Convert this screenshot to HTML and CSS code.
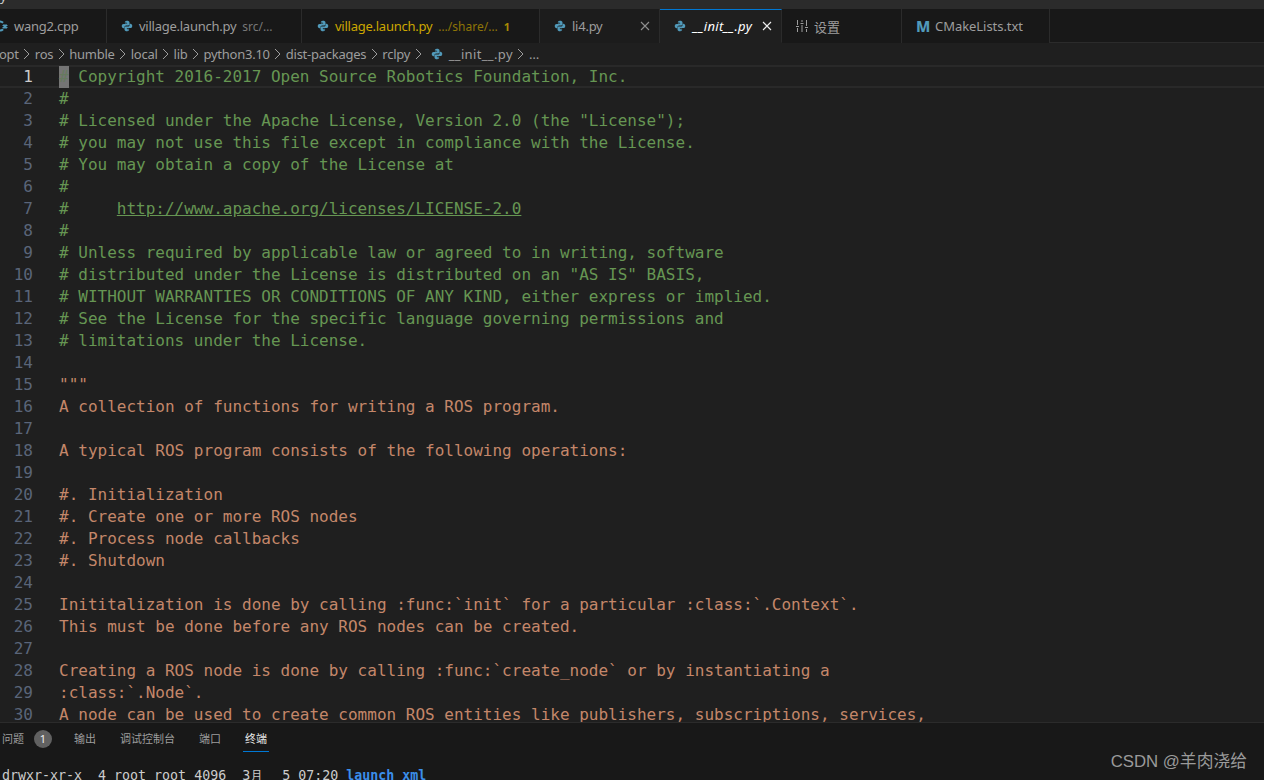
FILE: index.html
```html
<!DOCTYPE html>
<html>
<head>
  <link rel="stylesheet" href="styles.css">
</head>
<body>
  <svg class="icon-defs" width="0" height="0">
    <symbol id="py" viewBox="0 0 16 16">
      <path d="M7.9 1C5.6 1 5.2 2 5.2 3v1.500h3v.7H3.400C2 5.200 1 6.300 1 8s1 3 2.400 3h1.200V9.400c0-1.200 1-2.200 2.200-2.200h2.900c.9 0 1.600-.7 1.600-1.600V3c0-1.200-1.300-2-3.400-2zM6.500 2.200a.7.7 0 1 1 0 1.400.7.7 0 0 1 0-1.400z"/>
      <path d="M8.100 15c2.300 0 2.700-1 2.700-2v-1.500h-3v-.7h4.800C14 10.800 15 9.700 15 8s-1-3-2.400-3h-1.200v1.600c0 1.200-1 2.200-2.200 2.200H6.300c-.9 0-1.600.7-1.600 1.600V13c0 1.200 1.300 2 3.400 2zm1.400-1.200a.7.7 0 1 1 0-1.400.7.7 0 0 1 0 1.400z"/>
    </symbol>
    <symbol id="chev" viewBox="0 0 7 12">
      <path d="M1 1l5 5-5 5"/>
    </symbol>
  </svg>

  <div class="top-strip"><span class="top-glyph">y</span></div>

  <!-- Tabs -->
  <div class="tabs">
    <div class="tab tab-first">
      <svg class="tab-icon cpp-icon" viewBox="0 0 16 16"><path d="M8 2.500a5.500 5.500 0 1 0 3.800 9.500l-1.500-1.500A3.400 3.400 0 1 1 8 4.600c.9 0 1.700.3 2.300.9l1.500-1.500A5.400 5.400 0 0 0 8 2.500z"/><path d="M10.500 7h1V6h1v1h1V6h1v1h1v1h-1v1h1v1h-1v1h-1v-1h-1v1h-1v-1h-1V9h1V8h-1z"/></svg>
      <span class="tab-name">wang2.cpp</span>
    </div>
    <div class="tab tab-village">
      <svg class="tab-icon"><use href="#py"/></svg>
      <span class="tab-name">village.launch.py</span>
      <span class="tab-path">src/…</span>
    </div>
    <div class="tab tab-warn">
      <svg class="tab-icon"><use href="#py"/></svg>
      <span class="tab-name">village.launch.py</span>
      <span class="tab-path">…/share/…</span>
      <span class="tab-count">1</span>
    </div>
    <div class="tab tab-li4">
      <svg class="tab-icon"><use href="#py"/></svg>
      <span class="tab-name">li4.py</span>
      <svg class="tab-close" viewBox="0 0 10 10"><path d="M1 1l8 8M9 1l-8 8"/></svg>
    </div>
    <div class="tab tab-active">
      <svg class="tab-icon"><use href="#py"/></svg>
      <span class="tab-name">__init__.py</span>
      <svg class="tab-close" viewBox="0 0 10 10"><path d="M1 1l8 8M9 1l-8 8"/></svg>
    </div>
    <div class="tab tab-settings">
      <svg class="settings-icon" viewBox="0 0 12 12"><path d="M1.500 0v5M1.500 8v4M6 0v2M6 5v7M10.500 0v6M10.500 9v3M0 6.500h3M4.500 3.500h3M9 7.500h3"/></svg>
      <span class="tab-name">设置</span>
    </div>
    <div class="tab tab-cmake">
      <span class="m-icon">M</span>
      <span class="tab-name">CMakeLists.txt</span>
    </div>
  </div>

  <!-- Breadcrumbs -->
  <div class="crumbs">
    <span>opt</span><svg class="chev"><use href="#chev"/></svg>
    <span>ros</span><svg class="chev"><use href="#chev"/></svg>
    <span>humble</span><svg class="chev"><use href="#chev"/></svg>
    <span>local</span><svg class="chev"><use href="#chev"/></svg>
    <span>lib</span><svg class="chev"><use href="#chev"/></svg>
    <span>python3.10</span><svg class="chev"><use href="#chev"/></svg>
    <span>dist-packages</span><svg class="chev"><use href="#chev"/></svg>
    <span>rclpy</span><svg class="chev"><use href="#chev"/></svg>
    <svg class="crumb-icon"><use href="#py"/></svg>
    <span class="crumb-file">__init__.py</span><svg class="chev"><use href="#chev"/></svg>
    <span>…</span>
  </div>

  <!-- Editor -->
  <div class="editor">
    <div class="line line-current"><span class="num">1</span><span class="code com"><b class="cursor">#</b> Copyright 2016-2017 Open Source Robotics Foundation, Inc.</span></div>
    <div class="line"><span class="num">2</span><span class="code com">#</span></div>
    <div class="line"><span class="num">3</span><span class="code com"># Licensed under the Apache License, Version 2.0 (the "License");</span></div>
    <div class="line"><span class="num">4</span><span class="code com"># you may not use this file except in compliance with the License.</span></div>
    <div class="line"><span class="num">5</span><span class="code com"># You may obtain a copy of the License at</span></div>
    <div class="line"><span class="num">6</span><span class="code com">#</span></div>
    <div class="line"><span class="num">7</span><span class="code com">#     <u>http://www.apache.org/licenses/LICENSE-2.0</u></span></div>
    <div class="line"><span class="num">8</span><span class="code com">#</span></div>
    <div class="line"><span class="num">9</span><span class="code com"># Unless required by applicable law or agreed to in writing, software</span></div>
    <div class="line"><span class="num">10</span><span class="code com"># distributed under the License is distributed on an "AS IS" BASIS,</span></div>
    <div class="line"><span class="num">11</span><span class="code com"># WITHOUT WARRANTIES OR CONDITIONS OF ANY KIND, either express or implied.</span></div>
    <div class="line"><span class="num">12</span><span class="code com"># See the License for the specific language governing permissions and</span></div>
    <div class="line"><span class="num">13</span><span class="code com"># limitations under the License.</span></div>
    <div class="line"><span class="num">14</span><span class="code"></span></div>
    <div class="line"><span class="num">15</span><span class="code str">"""</span></div>
    <div class="line"><span class="num">16</span><span class="code str">A collection of functions for writing a ROS program.</span></div>
    <div class="line"><span class="num">17</span><span class="code"></span></div>
    <div class="line"><span class="num">18</span><span class="code str">A typical ROS program consists of the following operations:</span></div>
    <div class="line"><span class="num">19</span><span class="code"></span></div>
    <div class="line"><span class="num">20</span><span class="code str">#. Initialization</span></div>
    <div class="line"><span class="num">21</span><span class="code str">#. Create one or more ROS nodes</span></div>
    <div class="line"><span class="num">22</span><span class="code str">#. Process node callbacks</span></div>
    <div class="line"><span class="num">23</span><span class="code str">#. Shutdown</span></div>
    <div class="line"><span class="num">24</span><span class="code"></span></div>
    <div class="line"><span class="num">25</span><span class="code str">Inititalization is done by calling :func:`init` for a particular :class:`.Context`.</span></div>
    <div class="line"><span class="num">26</span><span class="code str">This must be done before any ROS nodes can be created.</span></div>
    <div class="line"><span class="num">27</span><span class="code"></span></div>
    <div class="line"><span class="num">28</span><span class="code str">Creating a ROS node is done by calling :func:`create_node` or by instantiating a</span></div>
    <div class="line"><span class="num">29</span><span class="code str">:class:`.Node`.</span></div>
    <div class="line"><span class="num">30</span><span class="code str">A node can be used to create common ROS entities like publishers, subscriptions, services,</span></div>
  </div>

  <!-- Panel -->
  <div class="panel">
    <div class="panel-tabs">
      <span class="panel-tab">问题</span>
      <span class="badge">1</span>
      <span class="panel-tab">输出</span>
      <span class="panel-tab">调试控制台</span>
      <span class="panel-tab">端口</span>
      <span class="panel-tab panel-tab-active">终端</span>
    </div>
    <div class="terminal">drwxr-xr-x  4 root root 4096  3<span class="month">月</span>  5 07:20 <b>launch_xml</b></div>
    <div class="watermark">CSDN @羊肉浇给</div>
  </div>
</body>
</html>
```
FILE: styles.css
```css
* {
  margin: 0;
  padding: 0;
  box-sizing: border-box;
}

html, body {
  height: 780px;
  overflow: hidden;
}

body {
  background: #1f1f1f;
  font-family: "Noto Sans", "Noto Sans CJK SC", sans-serif;
  display: flex;
  flex-direction: column;
}

.icon-defs {
  position: absolute;
}

.top-strip {
  height: 9px;
  background: #2b2b2b;
  overflow: hidden;
  flex-shrink: 0;
}

.top-glyph {
  display: block;
  margin: -13px 0 0 0;
  font-size: 13px;
  line-height: 18px;
  color: #ccc;
}

/* Tabs */
.tabs {
  display: flex;
  height: 34px;
  background: #181818;
  border-bottom: 1px solid #2b2b2b;
  flex-shrink: 0;
}

.tab {
  display: flex;
  align-items: center;
  height: 34px;
  border-right: 1px solid #2b2b2b;
  background: #181818;
  font-size: 13px;
  color: #9d9d9d;
  white-space: nowrap;
}

.tab-name {
  letter-spacing: -0.25px;
}

.tab-first { width: 107px; }
.tab-village { width: 195px; padding-left: 14px; }
.tab-warn { width: 238px; padding-left: 15px; }
.tab-li4 { width: 120px; padding-left: 14px; background: #1c1c1c; }
.tab-active {
  width: 122px;
  padding-left: 14px;
  background: #1f1f1f;
  border-top: 1px solid #0078d4;
  border-bottom: 1px solid #1f1f1f;
  color: #fff;
}
.tab-settings { width: 120px; padding-left: 14px; }
.tab-cmake { width: 148px; padding-left: 14px; }

.tab-icon {
  width: 12px;
  height: 12px;
  margin-right: 6px;
  fill: #519aba;
  flex-shrink: 0;
}

.cpp-icon {
  width: 16px;
  height: 16px;
  margin-left: -8px;
  margin-right: 6px;
}

.tab-active .tab-icon {
  margin-right: 7px;
}

.tab-active .tab-name {
  font-style: italic;
  width: 66px;
  letter-spacing: 0.3px;
}

.tab-li4 .tab-name {
  width: 65px;
}

.tab-path {
  margin-left: 6px;
  font-size: 12px;
  color: #777;
}

.tab-warn .tab-name {
  color: #cca700;
}

.tab-warn .tab-path {
  color: #8f7506;
}

.tab-count {
  margin-left: 6px;
  font-size: 11px;
  font-weight: 700;
  color: #a88a05;
}

.tab-close {
  width: 10px;
  height: 10px;
  margin-left: 3px;
  stroke: #8f8f8f;
  stroke-width: 1.1;
  fill: none;
  flex-shrink: 0;
}

.tab-active .tab-close {
  stroke: #eee;
}

.settings-icon {
  width: 12px;
  height: 12px;
  margin-right: 6px;
  stroke: #9d9d9d;
  stroke-width: 1;
  fill: none;
}

.tab-settings .tab-name {
  letter-spacing: 0;
}

.tab-cmake .tab-name {
  letter-spacing: -0.05px;
}

.m-icon {
  width: 13px;
  margin: 0 6px 0 0;
  font-size: 15px;
  font-weight: 800;
  line-height: 1;
  color: #519aba;
}

/* Breadcrumbs */
.crumbs {
  display: flex;
  align-items: center;
  gap: 4.5px;
  height: 22px;
  margin-left: -1px;
  font-size: 13px;
  letter-spacing: -0.25px;
  color: #9d9d9d;
  flex-shrink: 0;
  white-space: nowrap;
}

.chev {
  width: 7px;
  height: 12px;
  stroke: #9d9d9d;
  stroke-width: 1;
  fill: none;
  flex-shrink: 0;
}

.crumb-icon {
  width: 12px;
  height: 12px;
  margin: 0 1px 0 5px;
  fill: #519aba;
  flex-shrink: 0;
}

.crumb-file {
  letter-spacing: 0.35px;
}

/* Editor */
.editor {
  flex: 1;
  min-height: 0;
  overflow: hidden;
  border-top: 1px solid #292929;
  font-family: "DejaVu Sans Mono", monospace;
  font-size: 16px;
  line-height: 22px;
}

.line {
  display: flex;
  height: 22px;
}

.line-current {
  box-shadow: inset 0 1px 0 #292929, inset 0 -2px 0 #292929;
}

.num {
  width: 33px;
  margin-right: 26px;
  text-align: right;
  color: #5a6579;
  flex-shrink: 0;
}

.line-current .num {
  color: #cccccc;
}

.code {
  white-space: pre;
}

.com { color: #669653; }
.str { color: #c4876a; }

.cursor {
  display: inline-block;
  height: 22px;
  font-weight: 400;
  background: #757575;
  color: #667a5e;
}

/* Panel */
.panel {
  position: relative;
  height: 58px;
  background: #181818;
  border-top: 1px solid #2b2b2b;
  flex-shrink: 0;
  overflow: hidden;
}

.panel-tabs {
  display: flex;
  align-items: center;
  height: 31px;
  padding-left: 2px;
  font-size: 11px;
  color: #9d9d9d;
}

.panel-tab {
  margin-right: 24px;
  line-height: 31px;
  position: relative;
}

.panel-tab-active {
  color: #e7e7e7;
}

.panel-tab-active::after {
  content: '';
  position: absolute;
  left: -2px;
  right: -2px;
  bottom: 2px;
  height: 1px;
  background: #0078d4;
}

.badge {
  width: 18px;
  height: 18px;
  margin: 0 22px 0 -14px;
  border-radius: 50%;
  background: #616161;
  color: #f0f0f0;
  font-size: 11px;
  line-height: 18px;
  text-align: center;
}

.terminal {
  margin-top: 13px;
  padding-left: 2px;
  font-family: "DejaVu Sans Mono", monospace;
  font-size: 13.3px;
  line-height: 18px;
  color: #cccccc;
  white-space: pre;
}

.terminal b {
  color: #3b8eea;
}

.month {
  letter-spacing: 3px;
}

.watermark {
  position: absolute;
  right: 17px;
  top: 28px;
  font-family: "Liberation Sans", "Noto Sans CJK SC", sans-serif;
  font-size: 16.8px;
  line-height: 22px;
  color: #9a9a9a;
}
```
